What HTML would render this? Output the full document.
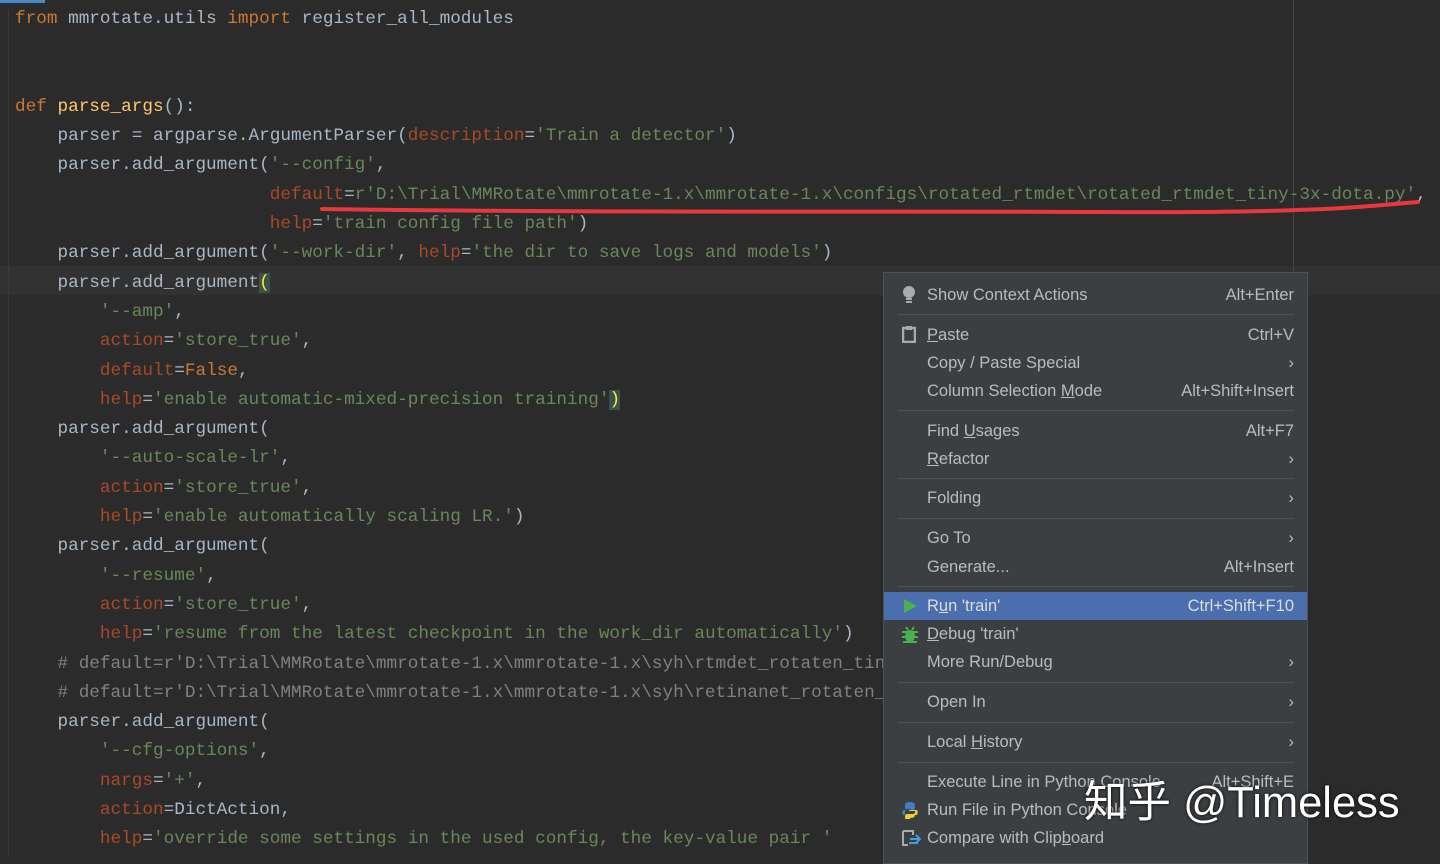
<!DOCTYPE html>
<html><head><meta charset="utf-8"><style>
body{margin:0;width:1440px;height:856px;overflow:hidden;background:#2b2b2b;position:relative;font-family:"Liberation Mono",monospace}
.code{position:absolute;left:15px;top:5px;font-size:17.7px;line-height:29.3px;color:#a9b7c6;white-space:pre}
.k{color:#cc7832}.s{color:#6a8759}.p{color:#aa4926}.f{color:#ffc66d}.c{color:#808080}
.cur{position:absolute;left:0;top:266px;width:1440px;height:29px;background:#323232}
.menu{position:absolute;left:883px;top:272px;width:423px;height:590px;background:#3c3f41;border:1px solid #515151;font-family:"Liberation Sans","Noto Sans CJK SC",sans-serif;font-size:16.5px;color:#bbbbbb}
.it{position:absolute;left:0;width:423px;height:28px;line-height:28px}
.it .t{position:absolute;left:43px}.it .r{position:absolute;right:13px}
.sep{position:absolute;left:14px;width:396px;height:1px;background:#515151}
.hl{background:#4b6eaf;color:#ddd}
u{text-decoration:underline}
</style></head><body>
<div style="position:absolute;left:0;top:0;width:45px;height:3px;background:#4a88c7"></div>
<div class="cur"></div>
<div style="position:absolute;left:1293px;top:0;width:1px;height:272px;background:#444"></div>
<div style="position:absolute;left:8px;top:10px;width:1px;height:846px;background:#3a3a3a"></div>
<div class="code"><span class="k">from</span> mmrotate.utils <span class="k">import</span> register_all_modules


<span class="k">def</span> <span class="f">parse_args</span>():
    parser = argparse.ArgumentParser(<span class="p">description</span>=<span class="s">'Train a detector'</span>)
    parser.add_argument(<span class="s">'--config'</span>,
                        <span class="p">default</span>=<span class="s">r'D:\Trial\MMRotate\mmrotate-1.x\mmrotate-1.x\configs\rotated_rtmdet\rotated_rtmdet_tiny-3x-dota.py'</span>,
                        <span class="p">help</span>=<span class="s">'train config file path'</span>)
    parser.add_argument(<span class="s">'--work-dir'</span>, <span class="p">help</span>=<span class="s">'the dir to save logs and models'</span>)
    parser.add_argument<span style="color:#ffef28;background:#3b514d">(</span>
        <span class="s">'--amp'</span>,
        <span class="p">action</span>=<span class="s">'store_true'</span>,
        <span class="p">default</span>=<span class="k">False</span>,
        <span class="p">help</span>=<span class="s">'enable automatic-mixed-precision training'</span><span style="color:#ffef28;background:#3b514d">)</span>
    parser.add_argument(
        <span class="s">'--auto-scale-lr'</span>,
        <span class="p">action</span>=<span class="s">'store_true'</span>,
        <span class="p">help</span>=<span class="s">'enable automatically scaling LR.'</span>)
    parser.add_argument(
        <span class="s">'--resume'</span>,
        <span class="p">action</span>=<span class="s">'store_true'</span>,
        <span class="p">help</span>=<span class="s">'resume from the latest checkpoint in the work_dir automatically'</span>)
    <span class="c"># default=r'D:\Trial\MMRotate\mmrotate-1.x\mmrotate-1.x\syh\rtmdet_rotaten_tiny</span>
    <span class="c"># default=r'D:\Trial\MMRotate\mmrotate-1.x\mmrotate-1.x\syh\retinanet_rotaten_</span>
    parser.add_argument(
        <span class="s">'--cfg-options'</span>,
        <span class="p">nargs</span>=<span class="s">'+'</span>,
        <span class="p">action</span>=DictAction,
        <span class="p">help</span>=<span class="s">'override some settings in the used config, the key-value pair '</span></div>
<svg style="position:absolute;left:0;top:0" width="1440" height="260"><path d="M322 209 C600 213 900 211 1100 212 S1350 208 1418 202" stroke="#e8383d" stroke-width="4" fill="none" stroke-linecap="round"/></svg>
<div class="menu">
<div class="it" style="top:8px"><svg style="position:absolute;left:18px;top:5px" width="14" height="18"><circle cx="7" cy="6" r="6" fill="#aaa"/><rect x="4" y="12" width="6" height="2" fill="#aaa"/><rect x="4" y="15" width="6" height="2" fill="#aaa"/></svg><span class="t">Show Context Actions</span><span class="r">Alt+Enter</span></div>
<div class="sep" style="top:41px"></div>
<div class="it" style="top:48px"><svg style="position:absolute;left:18px;top:5px" width="14" height="17"><rect x="1" y="2" width="12" height="14" fill="none" stroke="#aaa" stroke-width="2.5"/><rect x="4" y="0" width="6" height="4" fill="#aaa"/></svg><span class="t"><u>P</u>aste</span><span class="r">Ctrl+V</span></div>
<div class="it" style="top:76px"><span class="t">Copy / Paste Special</span><span class="r">›</span></div>
<div class="it" style="top:104px"><span class="t">Column Selection <u>M</u>ode</span><span class="r">Alt+Shift+Insert</span></div>
<div class="sep" style="top:137px"></div>
<div class="it" style="top:144px"><span class="t">Find <u>U</u>sages</span><span class="r">Alt+F7</span></div>
<div class="it" style="top:172px"><span class="t"><u>R</u>efactor</span><span class="r">›</span></div>
<div class="sep" style="top:205px"></div>
<div class="it" style="top:211px"><span class="t">Folding</span><span class="r">›</span></div>
<div class="sep" style="top:245px"></div>
<div class="it" style="top:251px"><span class="t">Go To</span><span class="r">›</span></div>
<div class="it" style="top:280px"><span class="t">Generate...</span><span class="r">Alt+Insert</span></div>
<div class="sep" style="top:313px"></div>
<div class="it hl" style="top:319px"><svg style="position:absolute;left:20px;top:7px" width="14" height="15"><path d="M0 0 L13 7 L0 14Z" fill="#4caf50"/></svg><span class="t">R<u>u</u>n 'train'</span><span class="r">Ctrl+Shift+F10</span></div>
<div class="it" style="top:347px"><svg style="position:absolute;left:17px;top:6px" width="18" height="17"><ellipse cx="9" cy="10" rx="5" ry="6" fill="#4caf50"/><path d="M1 6h16M1 11h16M2 16h14M5 1l2 3M13 1l-2 3" stroke="#4caf50" stroke-width="2"/></svg><span class="t"><u>D</u>ebug 'train'</span></div>
<div class="it" style="top:375px"><span class="t">More Run/Debug</span><span class="r">›</span></div>
<div class="sep" style="top:409px"></div>
<div class="it" style="top:415px"><span class="t">Open In</span><span class="r">›</span></div>
<div class="sep" style="top:449px"></div>
<div class="it" style="top:455px"><span class="t">Local <u>H</u>istory</span><span class="r">›</span></div>
<div class="sep" style="top:489px"></div>
<div class="it" style="top:495px"><span class="t">Execute Line in Python Console</span><span class="r">Alt+Shift+E</span></div>
<div class="it" style="top:523px"><svg style="position:absolute;left:17px;top:5px" width="18" height="18"><path d="M9 1C4 1 4 3 4 5v3h6v1H3C1 9 1 12 2 14h2v-3c0-2 1-2 3-2h5c1 0 2-1 2-2V4C14 2 12 1 9 1z" fill="#3f7fc3"/><path d="M9 17c5 0 5-2 5-4v-3H8V9h7c2 0 2 3 1 5h-2v-3c0 2-1 2-3 2H6c-1 0-2 1-2 2v2c0 2 2 3 5 3z" fill="#f5c83c"/></svg><span class="t">Run File in Python Console</span></div>
<div class="it" style="top:551px"><svg style="position:absolute;left:17px;top:5px" width="20" height="18"><path d="M2 2h10v4M2 2v14h5" stroke="#aaa" stroke-width="2" fill="none"/><path d="M9 10h10M15 6l4 4-4 4M17 14H8" stroke="#3d9ee0" stroke-width="2" fill="none"/></svg><span class="t">Compare with Clip<u>b</u>oard</span></div>
</div>
<div style="position:absolute;left:1084px;top:767px;font-family:'Liberation Sans','Noto Sans CJK SC',sans-serif;font-size:43.5px;color:#fff;white-space:nowrap;text-shadow:0 0 3px #000">知乎 @Timeless</div>
</body></html>
